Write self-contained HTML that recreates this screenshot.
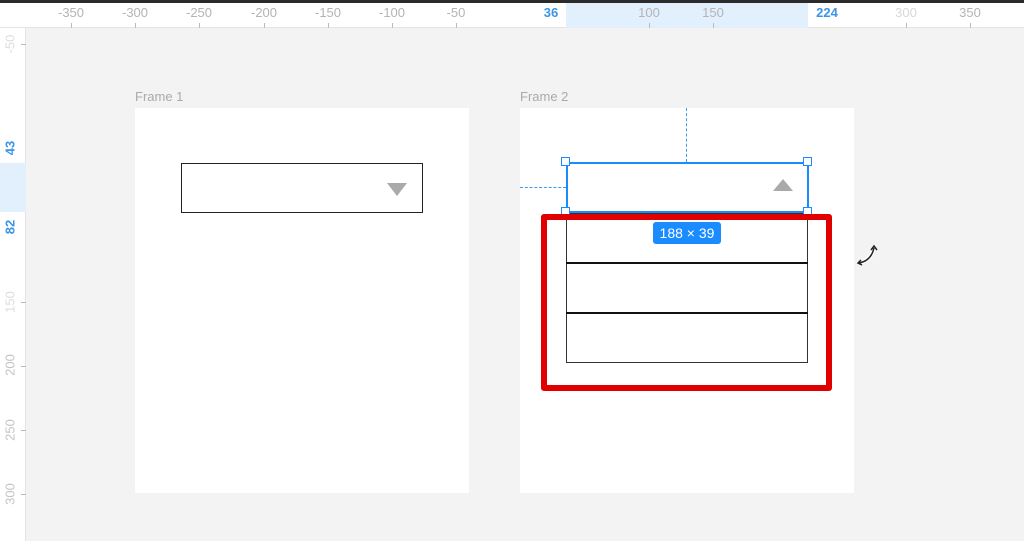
<!DOCTYPE html>
<html><head><style>
*{margin:0;padding:0;box-sizing:border-box}
body{width:1024px;height:541px;overflow:hidden;background:#f3f3f3;font-family:"Liberation Sans",sans-serif;position:relative}
.a{position:absolute}
.tl{font-size:13px;color:#b4b4b4;transform:translateX(-50%)}
.tk{width:1px;height:5px;background:#bbb;top:23px}
.ll{font-size:13px;color:#c4c4c4;transform:translate(-50%,-50%) rotate(-90deg);left:10px}
.lk{height:1px;width:5px;background:#bbb;left:21px}
.h{width:9px;height:9px;background:#fff;border:1px solid #1a8cff}
</style></head><body>
<div class="a" style="left:0;top:0;width:1024px;height:3px;background:#2b2b2b"></div>
<div class="a" style="left:0;top:3px;width:1024px;height:25px;background:#fff;border-bottom:1px solid #e4e4e4"></div>
<div class="a" style="left:0;top:28px;width:26px;height:513px;background:#fff;border-right:1px solid #e4e4e4"></div>
<div class="a" style="left:566px;top:3px;width:242px;height:25px;background:#e2f0fd"></div>
<div class="a" style="left:0;top:163px;width:26px;height:49px;background:#e2f0fd"></div>
<div class="a tl" style="left:71px;top:5px">-350</div><div class="a tk" style="left:71px"></div>
<div class="a tl" style="left:135px;top:5px">-300</div><div class="a tk" style="left:135px"></div>
<div class="a tl" style="left:199px;top:5px">-250</div><div class="a tk" style="left:199px"></div>
<div class="a tl" style="left:264px;top:5px">-200</div><div class="a tk" style="left:264px"></div>
<div class="a tl" style="left:328px;top:5px">-150</div><div class="a tk" style="left:328px"></div>
<div class="a tl" style="left:392px;top:5px">-100</div><div class="a tk" style="left:392px"></div>
<div class="a tl" style="left:456px;top:5px">-50</div><div class="a tk" style="left:456px"></div>
<div class="a tl" style="left:551px;top:5px;color:#3a95e8;font-weight:bold">36</div>
<div class="a tl" style="left:649px;top:5px">100</div><div class="a tk" style="left:649px"></div>
<div class="a tl" style="left:713px;top:5px">150</div><div class="a tk" style="left:713px"></div>
<div class="a tl" style="left:827px;top:5px;color:#3a95e8;font-weight:bold">224</div>
<div class="a tl" style="left:906px;top:5px;color:#d8d8d8">300</div><div class="a tk" style="left:906px"></div>
<div class="a tl" style="left:970px;top:5px">350</div><div class="a tk" style="left:970px"></div>
<div class="a ll" style="top:44px;color:#ddd">-50</div><div class="a lk" style="top:44px"></div>
<div class="a ll" style="top:148px;color:#3a95e8;font-weight:bold">43</div>
<div class="a ll" style="top:227px;color:#3a95e8;font-weight:bold">82</div>
<div class="a ll" style="top:302px;color:#ddd">150</div><div class="a lk" style="top:302px"></div>
<div class="a ll" style="top:365px">200</div><div class="a lk" style="top:366px"></div>
<div class="a ll" style="top:430px">250</div><div class="a lk" style="top:430px"></div>
<div class="a ll" style="top:494px">300</div><div class="a lk" style="top:494px"></div>

<div class="a" style="left:135px;top:89px;font-size:13px;color:#aaa">Frame 1</div>
<div class="a" style="left:135px;top:108px;width:334px;height:385px;background:#fff"></div>
<div class="a" style="left:181px;top:163px;width:242px;height:50px;border:1px solid #222"></div>
<div class="a" style="left:387px;top:183px;width:0;height:0;border-left:10px solid transparent;border-right:10px solid transparent;border-top:13px solid #aaa"></div>

<div class="a" style="left:520px;top:89px;font-size:13px;color:#aaa">Frame 2</div>
<div class="a" style="left:520px;top:108px;width:334px;height:385px;background:#fff"></div>
<div class="a" style="left:686px;top:108px;width:0;height:54px;border-left:1px dashed #3a9bf0"></div>
<div class="a" style="left:520px;top:187px;width:46px;height:0;border-top:1px dashed #3a9bf0"></div>
<div class="a" style="left:566px;top:213px;width:242px;height:150px;border:1px solid #333"></div>
<div class="a" style="left:566px;top:262px;width:242px;height:2px;background:#111"></div>
<div class="a" style="left:566px;top:312px;width:242px;height:2px;background:#111"></div>
<div class="a" style="left:566px;top:162px;width:243px;height:51px;border:2px solid #1a8cff"></div>
<div class="a" style="left:773px;top:179px;width:0;height:0;border-left:10px solid transparent;border-right:10px solid transparent;border-bottom:12px solid #aaa"></div>
<div class="a h" style="left:561px;top:157px"></div>
<div class="a h" style="left:803px;top:157px"></div>
<div class="a h" style="left:561px;top:207px"></div>
<div class="a h" style="left:803px;top:207px"></div>
<div class="a" style="left:541px;top:214px;width:291px;height:177px;border:6px solid #e00000;border-radius:3px"></div>
<div class="a" style="left:653px;top:222px;width:68px;height:22px;background:#1a8cff;border-radius:3px;color:#fff;font-size:14px;text-align:center;line-height:22px">188 × 39</div>
<svg class="a" style="left:855px;top:242px" width="26" height="26" viewBox="0 0 26 26"><path d="M4 21 Q16 19 19 6" fill="none" stroke="#fff" stroke-width="4"/><path d="M4 21 Q16 19 19 6" fill="none" stroke="#222" stroke-width="1.5"/><path d="M16 8 L19 4 L22 8 M6 18 L3 21 L7 23" fill="none" stroke="#222" stroke-width="1.5"/></svg>
</body></html>
